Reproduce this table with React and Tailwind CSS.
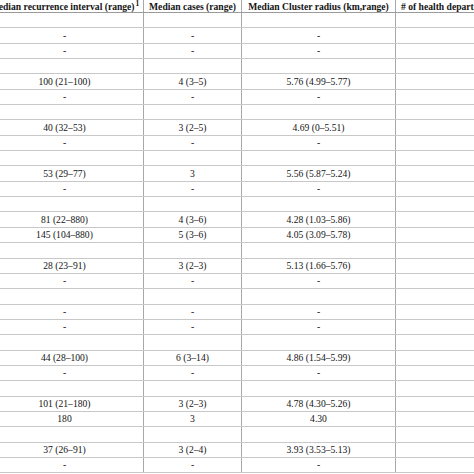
import React from 'react';

const rows = [
  ['', '', ''],
  ['-', '-', '-'],
  ['-', '-', '-'],
  ['', '', ''],
  ['100 (21–100)', '4 (3–5)', '5.76 (4.99–5.77)'],
  ['-', '-', '-'],
  ['', '', ''],
  ['40 (32–53)', '3 (2–5)', '4.69 (0–5.51)'],
  ['-', '-', '-'],
  ['', '', ''],
  ['53 (29–77)', '3', '5.56 (5.87–5.24)'],
  ['-', '-', '-'],
  ['', '', ''],
  ['81 (22–880)', '4 (3–6)', '4.28 (1.03–5.86)'],
  ['145 (104–880)', '5 (3–6)', '4.05 (3.09–5.78)'],
  ['', '', ''],
  ['28 (23–91)', '3 (2–3)', '5.13 (1.66–5.76)'],
  ['-', '-', '-'],
  ['', '', ''],
  ['-', '-', '-'],
  ['-', '-', '-'],
  ['', '', ''],
  ['44 (28–100)', '6 (3–14)', '4.86 (1.54–5.99)'],
  ['-', '-', '-'],
  ['', '', ''],
  ['101 (21–180)', '3 (2–3)', '4.78 (4.30–5.26)'],
  ['180', '3', '4.30'],
  ['', '', ''],
  ['37 (26–91)', '3 (2–4)', '3.93 (3.53–5.13)'],
  ['-', '-', '-'],
];

const cols = 'grid grid-cols-[158px_98px_154px_180px]';

export default function App() {
  return (
    <div
      className="w-[474px] h-[474px] overflow-hidden bg-white text-[#141414]"
      style={{ fontFamily: '"Liberation Serif", "Times New Roman", serif' }}
    >
      <div className="ml-[-14px] w-[590px]">
        <div className={`${cols} h-[13px] border-b border-[#9a9a9a] text-[9.6px] font-bold leading-none`}>
          <div className="border-r border-[#a8a8a8] flex items-start justify-center pt-[2px] whitespace-nowrap">
            Median recurrence interval (range)
            <span className="text-[7.5px] font-bold relative top-[-2px] ml-[1px]">1</span>
          </div>
          <div className="border-r border-[#a8a8a8] flex items-start justify-center pt-[2px] whitespace-nowrap">
            Median cases (range)
          </div>
          <div className="border-r border-[#a8a8a8] flex items-start justify-center pt-[2px] whitespace-nowrap">
            Median Cluster radius (km,range)
          </div>
          <div className="flex items-start pl-[5px] pt-[2px] whitespace-nowrap">
            # of health departments
          </div>
        </div>
        {rows.map((r, i) => (
          <div
            key={i}
            className={`${cols} h-[15.35px] border-b-[1.5px] border-[#c8c8c8] text-[9.6px] leading-none`}
          >
            <div className="border-r border-[#a8a8a8] flex items-center justify-center whitespace-nowrap">{r[0]}</div>
            <div className="border-r border-[#a8a8a8] flex items-center justify-center whitespace-nowrap">{r[1]}</div>
            <div className="border-r border-[#a8a8a8] flex items-center justify-center whitespace-nowrap">{r[2]}</div>
            <div></div>
          </div>
        ))}
      </div>
    </div>
  );
}
